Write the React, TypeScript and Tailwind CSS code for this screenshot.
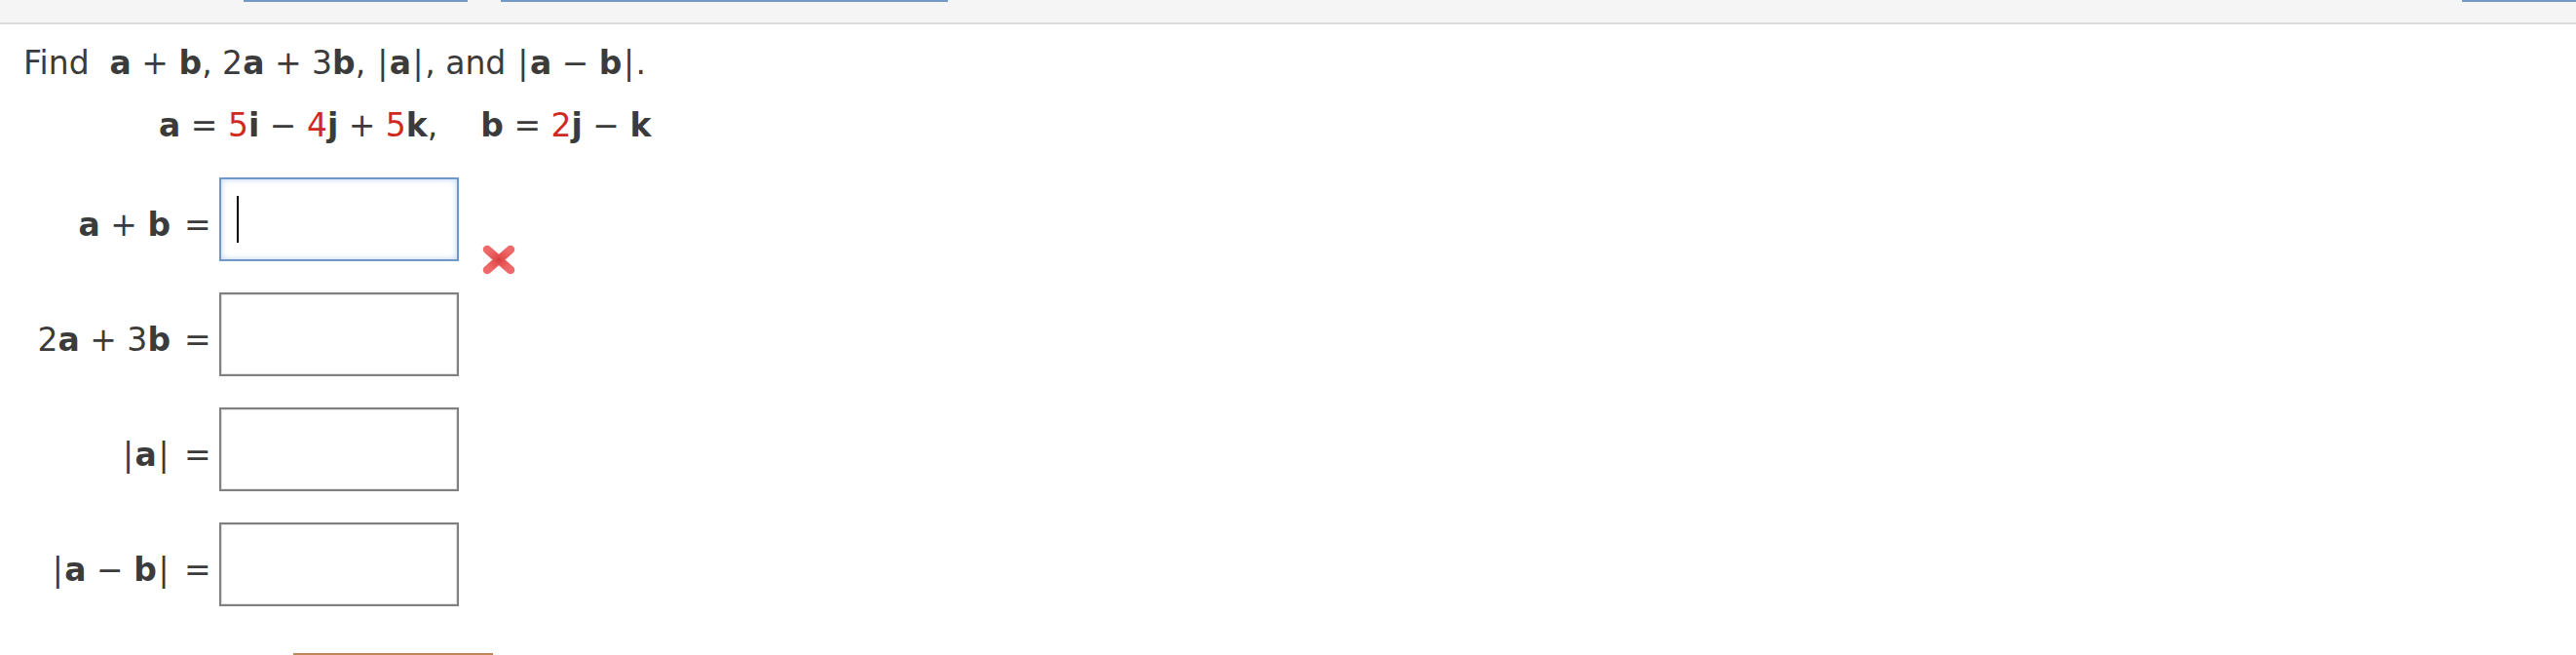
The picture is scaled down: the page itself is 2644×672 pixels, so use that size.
import React from "react";

const font = "font-[family-name:DejaVu_Sans,sans-serif]";

function Red({ children }: { children: React.ReactNode }) {
  return <span className="text-[#cf2a1f]">{children}</span>;
}

// norm bars get a hair of extra room, like the original typesetting
function Bar() {
  return <span className="px-[1.5px]">|</span>;
}

function XMark() {
  return (
    <svg width="34" height="31" viewBox="0 0 34 31">
      <defs>
        <radialGradient id="xg" cx="0.5" cy="0.5" r="0.6">
          <stop offset="0" stopColor="#d63a3a" />
          <stop offset="0.35" stopColor="#e45252" />
          <stop offset="1" stopColor="#ee6a6a" />
        </radialGradient>
      </defs>
      <g stroke="url(#xg)" strokeWidth="8.5" strokeLinecap="round">
        <line x1="5" y1="5" x2="29" y2="26" />
        <line x1="29" y1="5" x2="5" y2="26" />
      </g>
    </svg>
  );
}

type Row = { label: React.ReactNode; focused?: boolean; wrong?: boolean };

const rows: Row[] = [
  {
    label: (
      <>
        <b>a</b> + <b>b</b>
      </>
    ),
    focused: true,
    wrong: true,
  },
  {
    label: (
      <>
        2<b>a</b> + 3<b>b</b>
      </>
    ),
  },
  {
    label: (
      <>
        <Bar />
        <b>a</b>
        <Bar />
      </>
    ),
  },
  {
    label: (
      <>
        <Bar />
        <b>a</b> − <b>b</b>
        <Bar />
      </>
    ),
  },
];

export default function App() {
  return (
    <div className={`w-[2644px] h-[672px] overflow-hidden bg-white text-[#3b3b3b] ${font}`}>
      {/* top toolbar remnant */}
      <div className="h-[25px] bg-[#f5f5f5] border-b-2 border-[#dcdcd8] flex items-start">
        <div className="ml-[250px] w-[230px] h-[2px] bg-[#7399c6]" />
        <div className="ml-[34px] w-[459px] h-[2px] bg-[#7399c6]" />
        <div className="ml-auto w-[117px] h-[2px] bg-[#7399c6]" />
      </div>

      <div className="pl-[24px] text-[33px] leading-[40px]">
        <p className="mt-[20px]">
          Find&nbsp; <b>a</b> + <b>b</b>, 2<b>a</b> + 3<b>b</b>, <Bar />
          <b>a</b>
          <Bar />, and <Bar />
          <b>a</b> − <b>b</b>
          <Bar />.
        </p>
        <p className="mt-[24px] pl-[139px]">
          <b>a</b> = <Red>5</Red>
          <b>i</b> − <Red>4</Red>
          <b>j</b> + <Red>5</Red>
          <b>k</b>,<span className="inline-block w-[44px]" />
          <b>b</b> = <Red>2</Red>
          <b>j</b> − <b>k</b>
        </p>
      </div>

      <div className="mt-[33px] flex flex-col gap-[32px]">
        {rows.map((r, i) => (
          <div key={i} className="h-[86px] flex items-start text-[33px] leading-[40px]">
            <div className="w-[175px] text-right pt-[29px]">{r.label}</div>
            <div className="ml-[14px] w-[36px] pt-[29px]">=</div>
            <div
              className={
                r.focused
                  ? "w-[246px] h-[86px] border-2 border-[#6f98c8] shadow-[inset_0_0_6px_#b9d0ee] bg-white flex items-center pl-[16px]"
                  : "w-[246px] h-[86px] border-2 border-[#808080] shadow-[inset_0_0_0_1px_#e2e2e2] bg-white"
              }
            >
              {r.focused && <div className="w-[2px] h-[48px] bg-black" />}
            </div>
            {r.wrong && (
              <div className="ml-[24px] mt-[69px]">
                <XMark />
              </div>
            )}
          </div>
        ))}
      </div>

      <div className="mt-[48px] ml-[301px] w-[205px] h-[2px] bg-[#c08858]" />
    </div>
  );
}
